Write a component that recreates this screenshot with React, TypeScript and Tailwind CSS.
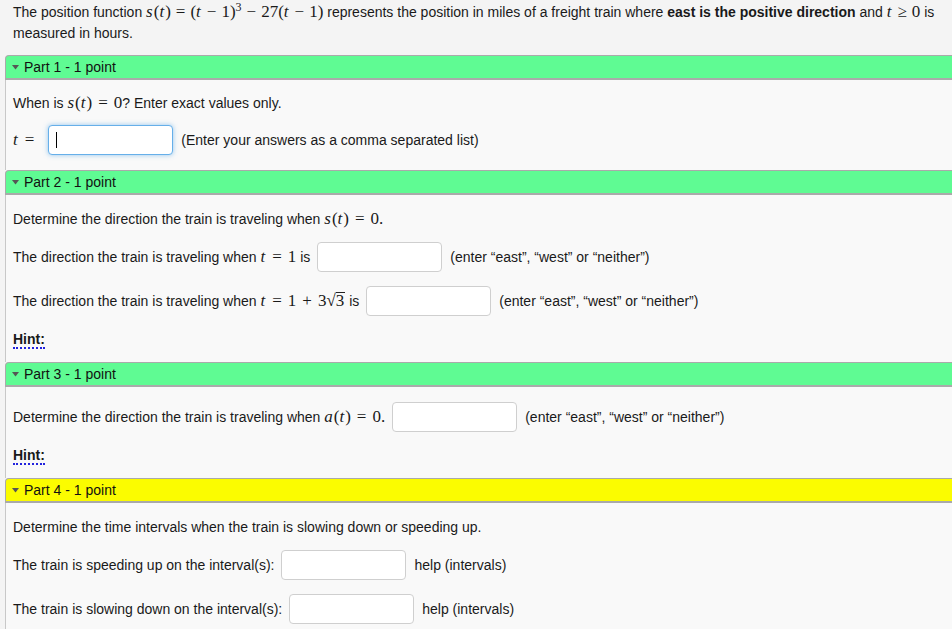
import React from 'react';

const M: React.FC<{ children: React.ReactNode; i?: boolean }> = ({ children, i }) => (
	<span className={`font-['Liberation_Serif',serif] text-[17px] ${i ? 'italic pr-[1px]' : ''}`}>{children}</span>
);

const V = ({ c }: { c: string }) => <M i>{c}</M>;

// binary operator / relation with MathJax-ish spacing
const Op = ({ c, tight }: { c: string; tight?: boolean }) => (
	<span className={`font-['Liberation_Serif',serif] text-[17px] ${tight ? 'px-[5px]' : 'px-[6px]'}`}>{c}</span>
);

const Box: React.FC<{ focus?: boolean }> = ({ focus }) => (
	<div
		className={
			focus
				? 'w-[125px] h-[30px] bg-white rounded-[4px] border border-[#66afe9] shadow-[0_0_5px_rgba(102,175,233,0.7)] flex items-center pl-[7px]'
				: 'w-[125px] h-[30px] bg-white rounded-[4px] border border-[#cfcfcf]'
		}
	>
		{focus && <div className="w-px h-[16px] bg-black" />}
	</div>
);

const Header: React.FC<{ n: number; yellow?: boolean }> = ({ n, yellow }) => (
	<div
		className={`h-[25px] border-t border-l border-[#aaa] border-b-2 rounded-tl-[4px] flex items-center pl-[6px] ${
			yellow ? 'bg-[#fbfc00]' : 'bg-[#5ffb93]'
		}`}
	>
		<svg width="7" height="5" viewBox="0 0 7 5" className="mr-[5px] mt-[1px]">
			<path d="M0 0 L7 0 L3.5 4.5 Z" fill="#555" />
		</svg>
		<span className="text-[14px] text-[#111]">Part {n} - 1 point</span>
	</div>
);

const Body: React.FC<{ children: React.ReactNode; pad: string }> = ({ children, pad }) => (
	<div className={`bg-[#f9f9f9] border-l border-[#c8c8c8] pl-[7px] ${pad}`}>{children}</div>
);

const Row: React.FC<{ label: React.ReactNode; after: string }> = ({ label, after }) => (
	<div className="flex items-center h-[30px]">
		<span className="whitespace-nowrap">{label}</span>
		<div className="ml-[7px]">
			<Box />
		</div>
		<span className="ml-[8px] whitespace-nowrap">{after}</span>
	</div>
);

const Hint = () => (
	<div className="h-[20px] flex items-center">
		<span className="font-bold leading-[15px] border-b-2 border-dotted border-[#2222dd]">Hint:</span>
	</div>
);

const dir = '(enter \u201ceast\u201d, \u201cwest\u201d or \u201cneither\u201d)';

export default function App() {
	return (
		<div className="min-h-[629px] w-[952px] overflow-hidden bg-[#f4f4f4] font-['Liberation_Sans',Arial,sans-serif] text-[14px] text-[#1a1a1a]">
			<div className="pl-[13px] pr-[6px] pt-[2px] leading-[20px]">
				The position function <V c="s" />
				<M>(</M>
				<V c="t" />
				<M>)</M>
				<Op c="=" tight />
				<M>(</M>
				<V c="t" />
				<Op c="−" tight />
				<M>1)</M>
				<span className="font-['Liberation_Serif',serif] text-[12px] relative top-[-6px]">3</span>
				<Op c="−" tight />
				<M>27(</M>
				<V c="t" />
				<Op c="−" tight />
				<M>1)</M> represents the position in miles of a freight train where{' '}
				<b>east is the positive direction</b> and <V c="t" />
				<Op c="≥" tight />
				<M>0</M> is measured in hours.
			</div>

			<div className="ml-[5px] w-[960px] mt-[12px] leading-[20px]">
				<Header n={1} />
				<Body pad="pt-[13px] pb-[15px]">
					<div>
						When is <V c="s" />
						<M>(</M>
						<V c="t" />
						<M>)</M>
						<Op c="=" />
						<M>0</M>? Enter exact values only.
					</div>
					<div className="flex items-center h-[30px] mt-[12px]">
						<span>
							<V c="t" />
							<Op c="=" />
						</span>
						<div className="ml-[8px]">
							<Box focus />
						</div>
						<span className="ml-[8px]">(Enter your answers as a comma separated list)</span>
					</div>
				</Body>

				<Header n={2} />
				<Body pad="pt-[14px] pb-[12px]">
					<div>
						Determine the direction the train is traveling when <V c="s" />
						<M>(</M>
						<V c="t" />
						<M>)</M>
						<Op c="=" />
						<M>0.</M>
					</div>
					<div className="mt-[13px]">
						<Row
							label={
								<>
									The direction the train is traveling when <V c="t" />
									<Op c="=" />
									<M>1</M> is
								</>
							}
							after={dir}
						/>
					</div>
					<div className="mt-[14px]">
						<Row
							label={
								<>
									The direction the train is traveling when <V c="t" />
									<Op c="=" />
									<M>1</M>
									<Op c="+" />
									<M>3</M>
									<M>√</M>
									<span className="font-['Liberation_Serif',serif] text-[17px] border-t border-[#222] leading-[16px] inline-block pr-[1px]">
										3
									</span>{' '}
									is
								</>
							}
							after={dir}
						/>
					</div>
					<div className="mt-[14px]">
						<Hint />
					</div>
				</Body>

				<Header n={3} />
				<Body pad="pt-[15px] pb-[12px]">
					<div>
						<Row
							label={
								<>
									Determine the direction the train is traveling when <V c="a" />
									<M>(</M>
									<V c="t" />
									<M>)</M>
									<Op c="=" />
									<M>0.</M>
								</>
							}
							after={dir}
						/>
					</div>
					<div className="mt-[14px]">
						<Hint />
					</div>
				</Body>

				<Header n={4} yellow />
				<Body pad="pt-[14px] pb-[20px]">
					<div>Determine the time intervals when the train is slowing down or speeding up.</div>
					<div className="mt-[13px]">
						<Row label="The train is speeding up on the interval(s):" after="help (intervals)" />
					</div>
					<div className="mt-[14px]">
						<Row label="The train is slowing down on the interval(s):" after="help (intervals)" />
					</div>
				</Body>
			</div>
		</div>
	);
}
